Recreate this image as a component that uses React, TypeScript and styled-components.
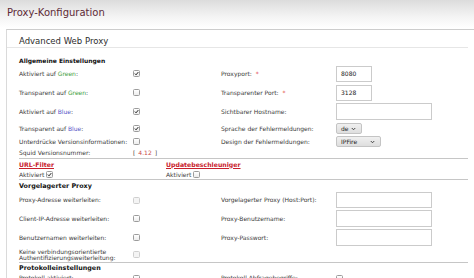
import React from "react";
import styled, { createGlobalStyle } from "styled-components";

const GlobalStyle = createGlobalStyle`
  html, body {
    margin: 0;
    padding: 0;
    background: #fff;
  }
  body {
    font-family: "DejaVu Sans", Verdana, sans-serif;
    color: #3a3a3a;
  }
`;

const Page = styled.div`
  width: 474px;
  height: 278px;
  overflow: hidden;
  background: linear-gradient(#dcdcdc 0, #f3f3f3 16px, #fff 28px);
`;

const TitleBar = styled.h1`
  margin: 0;
  height: 29px;
  padding-left: 7px;
  font-size: 10px;
  font-weight: normal;
  line-height: 26px;
  color: #5e2a36;
`;

const Box = styled.section`
  margin-left: 6px;
  border-top: 1px solid #cdcdcd;
  border-left: 1px solid #dadada;
  background: #fff;
`;

const BoxHeading = styled.h2`
  margin: 0 6px 0 0;
  padding: 6px 0 0 12px;
  height: 11px;
  font-size: 8.5px;
  line-height: 11px;
  font-weight: normal;
  color: #2e2e2e;
  border-bottom: 1px solid #e6e6e6;
`;

const Body = styled.div`
  padding: 0 6px 0 12px;
`;

const SectionTitle = styled.div<{ $h: number; $top?: number; $size?: number }>`
  height: ${(p) => p.$h - (p.$top ?? 0)}px;
  padding-top: ${(p) => p.$top ?? 0}px;
  display: flex;
  align-items: center;
  font-size: ${(p) => p.$size ?? 6}px;
  font-weight: bold;
  color: #111;
`;

const Row = styled.div<{ $h: number }>`
  display: grid;
  grid-template-columns: 114px 88px 115px 1fr;
  align-items: center;
  height: ${(p) => p.$h}px;
`;

const SplitRow = styled.div<{ $h: number }>`
  display: grid;
  grid-template-columns: 147px 1fr;
  align-items: center;
  height: ${(p) => p.$h}px;
`;

const Label = styled.div`
  font-size: 6px;
  line-height: 6px;
  white-space: nowrap;
  color: #3a3a3a;
`;

const Cell = styled.div`
  display: flex;
  align-items: center;
  font-size: 6px;
`;

const Green = styled.span`
  color: #3e9e3e;
`;

const Blue = styled.span`
  color: #5656c8;
`;

const Star = styled.span`
  color: #e03a3a;
  margin-left: 4px;
`;

const Version = styled.span`
  color: #c94848;
  margin: 0 3px;
`;

const Rule = styled.div`
  height: 1px;
  background: #c6c6c6;
`;

const LinkTitle = styled.a`
  font-size: 6.2px;
  font-weight: bold;
  color: #c8202c;
  text-decoration: underline;
`;

const TextBox = styled.div<{ $w: number; $h?: number }>`
  box-sizing: border-box;
  width: ${(p) => p.$w}px;
  height: ${(p) => p.$h ?? 17}px;
  border: 1px solid #cbcbcb;
  background: #fff;
  font-size: 6px;
  color: #222;
  display: flex;
  align-items: center;
  padding-left: 4px;
`;

const Select = styled.div<{ $w: number }>`
  box-sizing: border-box;
  width: ${(p) => p.$w}px;
  height: 11px;
  border: 1px solid #c4c4c4;
  border-radius: 2px;
  background: linear-gradient(#f0f0f0, #dedede);
  font-size: 6px;
  color: #222;
  display: flex;
  align-items: center;
  justify-content: space-between;
  padding: 0 5px 0 4px;
`;

const Box7 = styled.span<{ $disabled?: boolean }>`
  box-sizing: border-box;
  display: inline-flex;
  align-items: center;
  justify-content: center;
  width: 7px;
  height: 7px;
  border: 1px solid ${(p) => (p.$disabled ? "#cfcfcf" : "#9c9c9c")};
  border-radius: 1.5px;
  background: ${(p) => (p.$disabled ? "#f4f4f4" : "linear-gradient(#fff, #ededed)")};
  margin-left: ${(p) => (p.$disabled ? 0 : 0)}px;
`;

const Gap = styled.span`
  display: inline-block;
  width: 2px;
`;

const Check = ({ on, disabled }: { on?: boolean; disabled?: boolean }) => (
  <Box7 $disabled={disabled}>
    {on && (
      <svg width="7" height="7" viewBox="0 0 10 10">
        <path d="M1.8 5.2 L4.1 7.6 L8.6 2.2" fill="none" stroke="#1f1f1f" strokeWidth="2" />
      </svg>
    )}
  </Box7>
);

const Chevron = () => (
  <svg width="5" height="4" viewBox="0 0 10 8">
    <path d="M1.5 2 L5 5.5 L8.5 2" fill="none" stroke="#333" strokeWidth="1.8" />
  </svg>
);

export default function App() {
  return (
    <Page>
      <GlobalStyle />
      <TitleBar>Proxy-Konfiguration</TitleBar>
      <Box>
        <BoxHeading>Advanced Web Proxy</BoxHeading>
        <Body>
          <SectionTitle $h={16} $top={8}>
            Allgemeine Einstellungen
          </SectionTitle>

          <Row $h={19}>
            <Label>
              Aktiviert auf <Green>Green</Green>:
            </Label>
            <Cell>
              <Check on />
            </Cell>
            <Label>
              Proxyport:<Star>*</Star>
            </Label>
            <TextBox $w={36} $h={16}>8080</TextBox>
          </Row>
          <Row $h={19}>
            <Label>
              Transparent auf <Green>Green</Green>:
            </Label>
            <Cell>
              <Check />
            </Cell>
            <Label>
              Transparenter Port:<Star>*</Star>
            </Label>
            <TextBox $w={36} $h={16}>3128</TextBox>
          </Row>
          <Row $h={19}>
            <Label>
              Aktiviert auf <Blue>Blue</Blue>:
            </Label>
            <Cell>
              <Check on />
            </Cell>
            <Label>Sichtbarer Hostname:</Label>
            <TextBox $w={96} />
          </Row>
          <Row $h={15}>
            <Label>
              Transparent auf <Blue>Blue</Blue>:
            </Label>
            <Cell>
              <Check on />
            </Cell>
            <Label>Sprache der Fehlermeldungen:</Label>
            <Select $w={26}>
              de
              <Chevron />
            </Select>
          </Row>
          <Row $h={11}>
            <Label>Unterdrücke Versionsinformationen:</Label>
            <Cell>
              <Check />
            </Cell>
            <Label>Design der Fehlermeldungen:</Label>
            <Select $w={45}>
              IPFire
              <Chevron />
            </Select>
          </Row>
          <Row $h={11}>
            <Label>Squid Versionsnummer:</Label>
            <Cell>
              [<Version>4.12</Version>]
            </Cell>
          </Row>

          <Rule />
          <SplitRow $h={10}>
            <LinkTitle>URL-Filter</LinkTitle>
            <LinkTitle>Updatebeschleuniger</LinkTitle>
          </SplitRow>
          <SplitRow $h={10}>
            <Cell>
              Aktiviert<Gap />
              <Check on />
            </Cell>
            <Cell>
              Aktiviert<Gap />
              <Check />
            </Cell>
          </SplitRow>
          <Rule />

          <SectionTitle $h={11} $size={6.4}>
            Vorgelagerter Proxy
          </SectionTitle>
          <Row $h={18}>
            <Label>Proxy-Adresse weiterleiten:</Label>
            <Cell>
              <Check disabled />
            </Cell>
            <Label>Vorgelagerter Proxy (Host:Port):</Label>
            <TextBox $w={96} $h={16} />
          </Row>
          <Row $h={19}>
            <Label>Client-IP-Adresse weiterleiten:</Label>
            <Cell>
              <Check />
            </Cell>
            <Label>Proxy-Benutzername:</Label>
            <TextBox $w={96} />
          </Row>
          <Row $h={19}>
            <Label>Benutzernamen weiterleiten:</Label>
            <Cell>
              <Check />
            </Cell>
            <Label>Proxy-Passwort:</Label>
            <TextBox $w={96} />
          </Row>
          <Row $h={15}>
            <Label>
              Keine verbindungsorientierte
              <br />
              Authentifizierungsweiterleitung:
            </Label>
            <Cell>
              <Check disabled />
            </Cell>
          </Row>
          <Rule />

          <SectionTitle $h={9} $size={6.4}>
            Protokolleinstellungen
          </SectionTitle>
          <Row $h={12}>
            <Label>Protokoll aktiviert:</Label>
            <Cell>
              <Check />
            </Cell>
            <Label>Protokoll Abfragebegriffe:</Label>
            <Cell>
              <Check />
            </Cell>
          </Row>
        </Body>
      </Box>
    </Page>
  );
}
